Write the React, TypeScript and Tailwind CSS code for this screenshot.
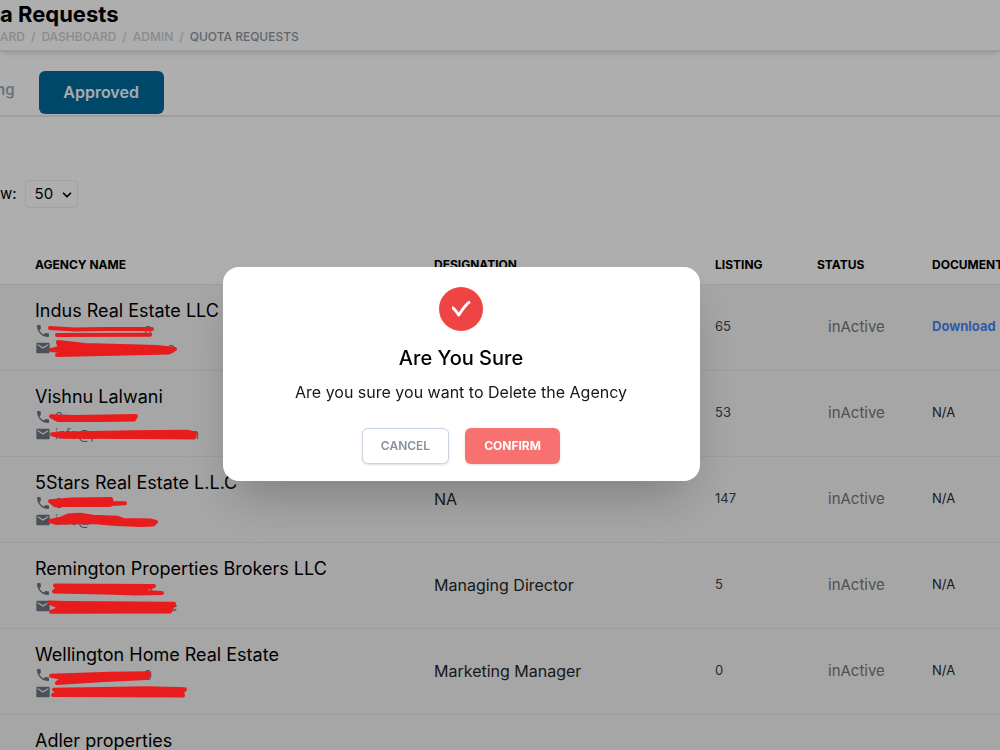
import { useState } from "react";
import { MdEmail, MdPhone } from "react-icons/md";
import { FiChevronDown } from "react-icons/fi";

type Contact = { lead: string; tail: string; width: number };

type Agency = {
  name: string;
  phone: Contact;
  mail: Contact;
  designation: string;
  listing: string;
  hasDocument?: boolean;
  strokes: string[];
};

const agencies: Agency[] = [
  {
    name: "Indus Real Estate LLC",
    phone: { lead: "", tail: "8", width: 97 },
    mail: { lead: "", tail: "o", width: 120 },
    designation: "",
    listing: "65",
    hasDocument: true,
    strokes: [
      "M15 6L40 7.500L70 7L117 7",
      "M22 13L115 12.700",
      "M23 20L50 23L122 25L140 27L134 30.500L113 31L22 33L25 29L16 28L25 26Z",
    ],
  },
  {
    name: "Vishnu Lalwani",
    phone: { lead: "0", tail: "", width: 80 },
    mail: { lead: "info@p", tail: "n", width: 144 },
    designation: "",
    listing: "53",
    strokes: [
      "M16 8.300L40 9L101 8L99 11.500L65 12L23 12Z",
      "M17 26.300L32 25.500L98 24.300L152 23.800L160 25.500L159 29.500L98 29L28 28.800Z",
    ],
  },
  {
    name: "5Stars Real Estate L.L.C",
    phone: { lead: "0", tail: "", width: 60 },
    mail: { lead: "info@", tail: "", width: 94 },
    designation: "NA",
    listing: "147",
    strokes: [
      "M15 7.300L37 5.500L76 5L77 9L90 9.300L76 10L75 11L37 11L20 11.300Z",
      "M15 27L25 25L33 21.600L45 20.700L58 22.700L83 23.700L88 26L115 26.500L121 28L118 30.500L106 31L81 30L58 28L20 28.700Z",
    ],
  },
  {
    name: "Remington Properties Brokers LLC",
    phone: { lead: "", tail: "3", width: 98 },
    mail: { lead: "", tail: "e", width: 122 },
    designation: "Managing Director",
    listing: "5",
    strokes: [
      "M20 5.500L119 6L108 9L109 12L127 13L101 13.500L70 12.500L19 11.500L23 9Z",
      "M14 22.500L32 23L139 23.800L135 31.500L16 31.800L26 28Z",
    ],
  },
  {
    name: "Wellington Home Real Estate",
    phone: { lead: "+", tail: "0", width: 97 },
    mail: { lead: "", tail: "", width: 126 },
    designation: "Marketing Manager",
    listing: "0",
    strokes: [
      "M16 9.700L75 7.700L114 7.300L112 12L65 14.300L22 17L28 12Z",
      "M19 23.700L112 22.300L150 23.300L147 26L148 29.500L18 29L24 26Z",
    ],
  },
  {
    name: "Adler properties",
    phone: { lead: "", tail: "", width: 98 },
    mail: { lead: "", tail: "", width: 98 },
    designation: "",
    listing: "",
    strokes: [],
  },
];

const crumbs = ["ARD", "DASHBOARD", "ADMIN"];

const ContactText = ({ contact }: { contact: Contact }) => (
  <span className="flex justify-between" style={{ width: contact.width }}>
    <span>{contact.lead}</span>
    <span>{contact.tail}</span>
  </span>
);

const AgencyRow = ({ agency }: { agency: Agency }) => (
  <tr className="h-[86px] border-b border-[#e2e2e2] bg-[#eeeeee]">
    <td className="pt-3.5 pl-[35px] align-top">
      <p className="text-lg leading-6 text-black">{agency.name}</p>
      <div className="relative text-[13px] leading-[17px] text-[#6b7280]">
        <div className="flex items-center gap-1">
          <MdPhone className="size-4 shrink-0" />
          <ContactText contact={agency.phone} />
        </div>
        <div className="flex items-center gap-1">
          <MdEmail className="size-4 shrink-0" />
          <ContactText contact={agency.mail} />
        </div>
        <svg
          className="absolute -top-px left-0 z-50"
          width="180"
          height="40"
          fill="none"
          stroke="#e81c1c"
          strokeWidth="4"
          strokeLinecap="round"
          strokeLinejoin="round"
        >
          {agency.strokes.map((d) => (
            <path key={d} d={d} fill={d.endsWith("Z") ? "#e81c1c" : "none"} />
          ))}
        </svg>
      </div>
    </td>
    <td className="text-base text-neutral-800">{agency.designation}</td>
    <td className="text-[13px] text-neutral-700">{agency.listing}</td>
    <td className="pl-[11px] text-[15px] text-[#737578]">inActive</td>
    <td className="text-[13px] text-neutral-800">
      {agency.hasDocument ? (
        <a href="#" className="font-bold text-[#4a82f0]">
          Download
        </a>
      ) : (
        "N/A"
      )}
    </td>
  </tr>
);

const ConfirmModal = ({ onClose }: { onClose: () => void }) => (
  <div className="fixed inset-0 z-40 flex items-center justify-center bg-black/30 pr-[78px] pb-0.5">
    <div
      role="dialog"
      aria-modal="true"
      className="flex w-full max-w-[477px] flex-col items-center rounded-2xl bg-white pt-5 pb-[17px] shadow-2xl"
    >
      <div className="flex size-11 items-center justify-center rounded-full bg-[#ef4444]">
        <svg width="22" height="22" viewBox="0 0 22 22" fill="none" stroke="white" strokeWidth="2.900">
          <path d="M2 9.800C4 9.800 5 12 8.800 17C12 12 16 6 20 3.800" strokeLinejoin="round" />
        </svg>
      </div>
      <h2 className="mt-[13px] text-xl leading-7 font-medium text-black">Are You Sure</h2>
      <p className="mt-2 text-base leading-6 text-neutral-900">Are you sure you want to Delete the Agency</p>
      <div className="mt-6 flex gap-4">
        <button
          onClick={onClose}
          className="h-9 w-[87px] rounded-md border border-slate-300 bg-white text-xs font-semibold text-[#8592a0] shadow-sm"
        >
          CANCEL
        </button>
        <button
          onClick={onClose}
          className="h-9 w-[95px] rounded-md bg-[#f87171] text-xs font-bold text-white shadow-sm"
        >
          CONFIRM
        </button>
      </div>
    </div>
  </div>
);

export default function App() {
  const [open, setOpen] = useState(true);

  return (
    <div className="h-screen overflow-hidden bg-[#fafafa] font-['Inter',sans-serif]">
      <header className="h-[51px] border-b border-[#e0e0e0] shadow-md">
        <h1 className="text-[22px] leading-7 font-bold text-black">a Requests</h1>
        <nav className="flex gap-1.5 text-xs leading-[18px] font-medium text-[#c4c8cc]">
          {crumbs.map((crumb) => (
            <span key={crumb} className="flex gap-1.5">
              <a href="#">{crumb}</a>
              <span>/</span>
            </span>
          ))}
          <span className="text-[#8b929c]">QUOTA REQUESTS</span>
        </nav>
      </header>

      <div className="-ml-1 flex items-end gap-6 border-b-2 border-[#e2e2e2] pt-[19px] pb-px">
        <button className="h-11 pb-1 text-[15px] font-semibold text-[#9ca3af]">ng</button>
        <button className="h-[43px] w-[125px] rounded-md bg-[#006898] pb-0.5 text-base font-semibold text-gray-100">
          Approved
        </button>
      </div>

      <section className="mt-9 border-t border-[#f7f7f7]">
        <div className="flex items-center gap-2 pt-[26px] text-[15px] text-black">
          <label htmlFor="show">w:</label>
          <div className="relative">
            <select
              id="show"
              defaultValue="50"
              className="h-7 w-[53px] appearance-none rounded border border-[#e8e8e8] pl-[9px]"
            >
              <option>10</option>
              <option>50</option>
            </select>
            <FiChevronDown className="pointer-events-none absolute top-2 right-1 size-3.5 stroke-3" />
          </div>
        </div>

        <table className="mt-[38px] w-full table-fixed text-left whitespace-nowrap">
          <thead>
            <tr className="h-[38px] border-b border-[#e2e2e2] text-xs text-black">
              <th className="w-[434px] pl-[35px] font-bold">AGENCY NAME</th>
              <th className="w-[281px] font-bold">DESIGNATION</th>
              <th className="w-[102px] font-bold">LISTING</th>
              <th className="w-[115px] font-bold">STATUS</th>
              <th className="font-bold">DOCUMENT</th>
            </tr>
          </thead>
          <tbody>
            {agencies.map((agency) => (
              <AgencyRow key={agency.name} agency={agency} />
            ))}
          </tbody>
        </table>
      </section>

      {open && <ConfirmModal onClose={() => setOpen(false)} />}
    </div>
  );
}
